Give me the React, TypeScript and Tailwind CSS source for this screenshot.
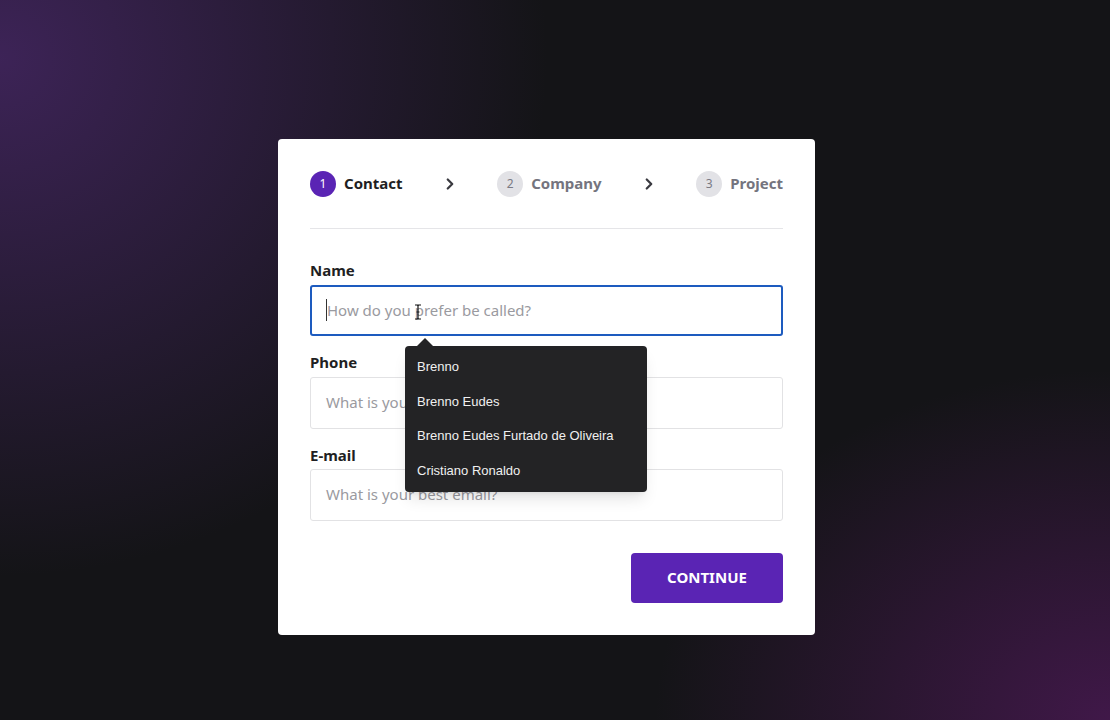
import { ChevronRight } from 'lucide-react';

const steps = [
  { n: 1, label: 'Contact', active: true },
  { n: 2, label: 'Company', active: false },
  { n: 3, label: 'Project', active: false },
];

const suggestions = ['Brenno', 'Brenno Eudes', 'Brenno Eudes Furtado de Oliveira', 'Cristiano Ronaldo'];

function Step({ n, label, active }: { n: number; label: string; active: boolean }) {
  return (
    <div className="flex items-center gap-2">
      <span
        className={
          active
            ? 'flex h-[26px] w-[26px] items-center justify-center rounded-full bg-[#5a24b4] text-[12px] text-white'
            : 'flex h-[26px] w-[26px] items-center justify-center rounded-full bg-[#e2e2e6] text-[12px] text-[#7a7a84]'
        }
      >
        {n}
      </span>
      <span className={active ? 'text-[15px] font-bold text-[#1f1f23]' : 'text-[15px] font-bold text-[#74747e]'}>
        {label}
      </span>
    </div>
  );
}

function IBeam() {
  return (
    <svg width="8" height="16" viewBox="0 0 8 16" className="absolute top-[19px] left-[104px]">
      <path d="M1 1h2.5L4 2l.5-1H7M4 2v12M1 15h2.5L4 14l.5 1H7M2.5 8h3" stroke="#111" strokeWidth="1.2" fill="none" />
    </svg>
  );
}

export default function App() {
  return (
    <div
      className="flex h-[720px] w-[1110px] items-center justify-center bg-[#141417]"
      style={{
        backgroundImage:
          'radial-gradient(ellipse 760px 720px at 0% 8%, rgba(68,38,98,0.85), transparent 72%), radial-gradient(ellipse 650px 500px at 100% 100%, rgba(75,25,85,0.8), transparent 70%)',
        fontFamily: '"Noto Sans", Inter, sans-serif',
      }}
    >
      <div className="mt-[53px] mr-[17px] w-[537px] rounded bg-white px-8 pt-8 pb-8">
        <div className="flex items-center justify-between border-b border-[#e5e5e8] pb-[31px]">
          <Step {...steps[0]} />
          <ChevronRight size={18} strokeWidth={3} className="text-[#3a3a40]" />
          <Step {...steps[1]} />
          <ChevronRight size={18} strokeWidth={3} className="text-[#3a3a40]" />
          <Step {...steps[2]} />
        </div>

        <div className="mt-[29px] flex flex-col">
          <label className="text-[15px] leading-6 font-bold text-[#1f1f23]">Name</label>
          <div className="relative mt-[3px]">
            <div className="flex h-[51px] items-center rounded-[3px] border-2 border-[#1d5bbf] pl-[14px]">
              <span className="h-[22px] w-px bg-[#333]" />
              <span className="text-[15px] text-[#9a9aa0]">How do you prefer be called?</span>
            </div>
            <IBeam />
            <div className="absolute top-[61px] left-[95px] z-10 w-[242px]">
              <div className="absolute -top-[8px] left-[12px] h-0 w-0 border-x-[8px] border-b-[8px] border-x-transparent border-b-[#232325]" />
              <div
                className="flex flex-col rounded bg-[#232325] py-[4px] shadow-lg"
                style={{ fontFamily: '"Liberation Sans", Arial, sans-serif' }}
              >
                {suggestions.map((s) => (
                  <div key={s} className="flex h-[34.5px] items-center px-3 text-[13px] text-[#f0f0f0]">
                    {s}
                  </div>
                ))}
              </div>
            </div>
          </div>

          <label className="mt-[14px] text-[15px] leading-6 font-bold text-[#1f1f23]">Phone</label>
          <div className="mt-[3px] flex h-[52px] items-center rounded-[3px] border border-[#e2e2e4] pl-[15px]">
            <span className="text-[15px] text-[#9a9aa0]">What is your best phone?</span>
          </div>

          <label className="mt-[14px] text-[15px] leading-6 font-bold text-[#1f1f23]">E-mail</label>
          <div className="mt-[2px] flex h-[52px] items-center rounded-[3px] border border-[#e2e2e4] pl-[15px]">
            <span className="text-[15px] text-[#9a9aa0]">What is your best email?</span>
          </div>

          <div className="mt-[32px] flex justify-end">
            <button className="h-[50px] w-[152px] rounded bg-[#5a24b4] text-[15px] font-bold text-white">
              CONTINUE
            </button>
          </div>
        </div>
      </div>
    </div>
  );
}
